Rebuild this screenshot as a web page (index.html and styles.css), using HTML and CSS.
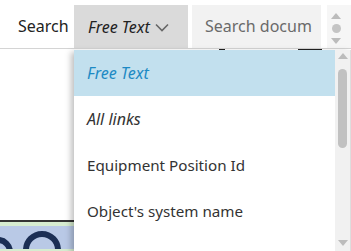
FILE: index.html
```html
<!DOCTYPE html>
<html>
<head>
<meta charset="utf-8">
<link rel="stylesheet" href="styles.css">
</head>
<body>
<div class="page">
  <header class="bar">
    <span class="label">Search</span>
    <div class="select">
      <span class="select-text">Free Text</span>
      <svg class="chev" width="14" height="9" viewBox="0 0 14 9"><path d="M1 1.5 L7 7.5 L13 1.5" fill="none" stroke="#666" stroke-width="1.6"/></svg>
    </div>
    <div class="input">Search docum</div>
    <div class="gap"></div>
    <div class="spin">
      <span class="tri up"></span>
      <span class="dot"></span>
      <span class="tri down"></span>
    </div>
  </header>
  <div class="content">
    <div class="peek"><span class="p1"></span><span class="p2"></span></div>
    <div class="spacer"></div>
    <div class="image">
      <svg width="74" height="23" viewBox="0 0 74 23"><rect width="74" height="23" fill="#b9c9e6"/><circle cx="-2" cy="26" r="12" fill="none" stroke="#1c2f55" stroke-width="6"/><circle cx="42" cy="24" r="16" fill="none" stroke="#1c2f55" stroke-width="6"/></svg>
    </div>
  </div>
  <div class="menu">
    <ul class="list">
      <li class="item active">Free Text</li>
      <li class="item italic">All links</li>
      <li class="item">Equipment Position Id</li>
      <li class="item">Object's system name</li>
      <li class="item"></li>
    </ul>
    <div class="scroll">
      <span class="tri up"></span>
      <span class="thumb"></span>
      <span class="fill"></span>
      <span class="tri down"></span>
    </div>
  </div>
</div>
</body>
</html>
```
FILE: styles.css
```css
* { box-sizing: border-box; }
html, body { margin: 0; padding: 0; background: #fff; }
body { font-family: "Noto Sans", "Open Sans", sans-serif; color: #333; width: 351px; height: 251px; overflow: hidden; }
.page { position: relative; width: 351px; height: 251px; overflow: hidden; }

.bar { display: flex; height: 49px; padding-top: 5px; border-bottom: 1px solid #d4d4d4; }
.label { width: 74px; padding-left: 18px; font-size: 16px; line-height: 43px; color: #222; }
.select { width: 114px; background: #dadada; display: flex; align-items: center; padding-left: 14px; gap: 5px; }
.select-text { font-style: italic; font-size: 16px; color: #222; }
.chev { margin-top: 1px; }
.input { width: 129px; margin-left: 4px; background: #f2f2f2; font-size: 16px; line-height: 43px; padding-left: 13px; color: #6a6a6a; white-space: nowrap; overflow: hidden; }
.gap { width: 6px; }
.spin { flex: 1; background: #f6f6f6; display: flex; flex-direction: column; align-items: flex-start; padding: 8px 0 0 4px; gap: 5px; }
.tri { width: 0; height: 0; border-left: 5px solid transparent; border-right: 5px solid transparent; }
.tri.up { border-bottom: 6px solid #bcbcbc; }
.tri.down { border-top: 6px solid #bcbcbc; }
.dot { width: 9px; height: 9px; border-radius: 50%; background: #c4c4c4; margin-left: 1px; }

.content { display: flex; flex-direction: column; height: 202px; }
.peek { height: 2px; position: relative; }
.peek span { position: absolute; top: 0; height: 2px; background: #222; }
.p1 { left: 219px; width: 6px; }
.p2 { left: 298px; width: 24px; }
.spacer { height: 171px; border-bottom: 2px solid #333; }
.image { width: 74px; height: 29px; background: #d6ecd0; padding: 4px 2px 0 0; }
.image svg { display: block; }

.menu { position: absolute; left: 74px; top: 50px; width: 277px; height: 201px; background: #fff; display: flex; box-shadow: -3px 2px 6px rgba(0,0,0,0.25); }
.list { list-style: none; margin: 0; padding: 0; flex: 1; overflow: hidden; }
.item { height: 46px; padding-left: 13px; font-size: 15.2px; line-height: 46px; color: #333; }
.item.italic { font-style: italic; font-size: 16px; }
.item.active { background: #c2e0ee; color: #1d8ac4; font-style: italic; font-size: 16px; }
.scroll { width: 16px; background: #f1f1f1; border-right: 1px solid #ddd; display: flex; flex-direction: column; align-items: center; padding-top: 3px; }
.scroll .tri { margin-left: 1px; }
.thumb { width: 9px; height: 79px; background: #c1c1c1; border-radius: 5px; margin-top: 10px; }
.fill { flex: 1; }
.scroll .tri.down { margin-bottom: 5px; }
```
